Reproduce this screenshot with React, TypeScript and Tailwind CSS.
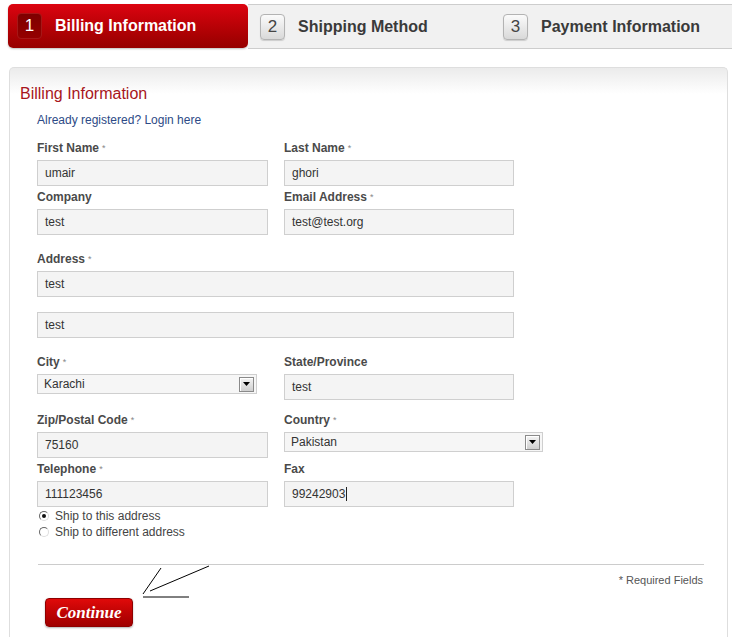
import React from "react"

function Req() {
  return <span className="ml-[3px] align-top text-[9px] font-normal text-[#888]">*</span>
}

function Label({ text, required }: { text: string; required?: boolean }) {
  return (
    <div className="mb-[4px] h-[17px] pt-[2px] text-[12px] font-bold leading-[15px] text-[#4a4a4a]">
      {text}
      {required && <Req />}
    </div>
  )
}

function Field({ value, className = "w-[231px]", caret }: { value: string; className?: string; caret?: boolean }) {
  return (
    <div
      className={`flex h-[26px] items-center border border-[#cfcfcf] bg-[#f4f4f4] pl-[7px] text-[12px] text-[#333] ${className}`}
    >
      {value}
      {caret && <span className="ml-px inline-block h-[14px] w-px bg-[#222]" />}
    </div>
  )
}

function Select({ value, className }: { value: string; className: string }) {
  return (
    <div
      className={`flex h-[20px] items-center justify-between border border-[#cfcfcf] bg-[#f6f6f6] pl-[6px] pr-[2px] text-[12px] text-[#333] ${className}`}
    >
      {value}
      <span className="flex h-[15px] w-[15px] items-center justify-center border border-[#8a8a8a] bg-gradient-to-b from-[#f4f4f4] to-[#cfcfcf] shadow-[inset_1px_1px_0_#fff]">
        <svg width="7" height="4" viewBox="0 0 7 4">
          <path d="M0 0h7L3.5 4z" fill="#000" />
        </svg>
      </span>
    </div>
  )
}

function StepBox({ n, active }: { n: number; active?: boolean }) {
  return active ? (
    <span className="flex h-[26px] w-[25px] items-center justify-center rounded-[4px] border border-[#a51818] bg-gradient-to-b from-[#7e0000] to-[#950000] text-[17px] text-white">
      {n}
    </span>
  ) : (
    <span className="flex h-[26px] w-[25px] items-center justify-center rounded-[4px] border border-[#b3b3b3] bg-gradient-to-b from-[#fbfbfb] to-[#d9d9d9] text-[17px] text-[#444] shadow-[0_1px_1px_rgba(0,0,0,0.15)]">
      {n}
    </span>
  )
}

function Radio({ checked, label }: { checked?: boolean; label: string }) {
  return (
    <div className="flex h-[16px] items-center text-[12px] text-[#444]">
      <span className="ml-[2px] mr-[6px] flex h-[10px] w-[10px] items-center justify-center rounded-full border border-[#666] border-b-[#ddd] border-r-[#ddd] bg-white">
        {checked && <span className="h-[4px] w-[4px] rounded-full bg-[#111]" />}
      </span>
      {label}
    </div>
  )
}

export default function App() {
  return (
    <div className="relative h-[637px] overflow-hidden bg-white font-['Liberation_Sans',Arial,sans-serif]">
      {/* steps */}
      <div className="flex pl-[8px] pt-[4px]">
        <div className="flex h-[44px] w-[240px] items-center gap-[13px] rounded-[5px] bg-gradient-to-b from-[#dc0410] to-[#960000] pl-[9px] shadow-[0_1px_2px_rgba(0,0,0,0.25)]">
          <StepBox n={1} active />
          <span className="text-[16px] font-bold text-white">Billing Information</span>
        </div>
        <div className="flex h-[45px] flex-1 items-center border-y border-[#cdcdcd] bg-[#f1f1f1]">
          <div className="flex w-[243px] items-center gap-[13px] pl-[12px]">
            <StepBox n={2} />
            <span className="text-[16px] font-bold text-[#3a3a3a]">Shipping Method</span>
          </div>
          <div className="flex items-center gap-[13px] pl-[12px]">
            <StepBox n={3} />
            <span className="text-[16px] font-bold text-[#3a3a3a]">Payment Information</span>
          </div>
        </div>
      </div>

      {/* panel */}
      <div className="ml-[9px] mr-[4px] mt-[18px] h-[700px] rounded-t-[5px] border border-b-0 border-[#dedede] bg-[linear-gradient(#ebebeb,#ffffff_26px)] pl-[10px] pt-[16px]">
        <h2 className="text-[16px] leading-[20px] text-[#a8161c]">Billing Information</h2>
        <div className="ml-[17px]">
          <p className="mt-[8px] text-[12px] leading-[16px] text-[#2d4a86]">Already registered? Login here</p>

          <div className="mt-[11px] grid grid-cols-[231px_230px] gap-x-[16px]">
            <div>
              <Label text="First Name" required />
              <Field value="umair" />
            </div>
            <div>
              <Label text="Last Name" required />
              <Field value="ghori" className="w-[230px]" />
            </div>
          </div>

          <div className="mt-[2px] grid grid-cols-[231px_230px] gap-x-[16px]">
            <div>
              <Label text="Company" />
              <Field value="test" />
            </div>
            <div>
              <Label text="Email Address" required />
              <Field value="test@test.org" className="w-[230px]" />
            </div>
          </div>

          <div className="mt-[15px]">
            <Label text="Address" required />
            <Field value="test" className="w-[477px]" />
            <Field value="test" className="mt-[15px] w-[477px]" />
          </div>

          <div className="mt-[15px] grid grid-cols-[231px_230px] gap-x-[16px]">
            <div>
              <Label text="City" required />
              <Select value="Karachi" className="w-[220px]" />
            </div>
            <div>
              <Label text="State/Province" />
              <Field value="test" className="w-[230px]" />
            </div>
          </div>

          <div className="mt-[11px] grid grid-cols-[231px_259px] gap-x-[16px]">
            <div>
              <Label text="Zip/Postal Code" required />
              <Field value="75160" />
            </div>
            <div>
              <Label text="Country" required />
              <Select value="Pakistan" className="w-[259px]" />
            </div>
          </div>

          <div className="mt-[2px] grid grid-cols-[231px_230px] gap-x-[16px]">
            <div>
              <Label text="Telephone" required />
              <Field value="111123456" />
            </div>
            <div>
              <Label text="Fax" />
              <Field value="99242903" className="w-[230px]" caret />
            </div>
          </div>

          <div className="mt-[1px]">
            <Radio checked label="Ship to this address" />
            <Radio label="Ship to different address" />
          </div>

          <div className="ml-[1px] mt-[24px] w-[666px] border-t border-[#cccccc]">
            <p className="mt-[8px] pr-[1px] text-right text-[11px] leading-[14px] text-[#555]">* Required Fields</p>
          </div>

          <button
            type="button"
            className="ml-[8px] mt-[11px] flex h-[29px] w-[88px] items-center justify-center rounded-[4px] border border-[#8e0000] bg-gradient-to-b from-[#e00a0a] to-[#a00000] font-['Liberation_Serif',Georgia,serif] text-[17px] font-bold italic text-white shadow-[0_1px_2px_rgba(0,0,0,0.3)]"
          >
            Continue
          </button>
        </div>
      </div>

      {/* hand-drawn arrow */}
      <svg className="pointer-events-none absolute left-0 top-0" width="732" height="637" viewBox="0 0 732 637">
        <path d="M161 568L143 594M209 566L150 591M143 597H189" stroke="#000" strokeWidth="1" fill="none" />
      </svg>
    </div>
  )
}
